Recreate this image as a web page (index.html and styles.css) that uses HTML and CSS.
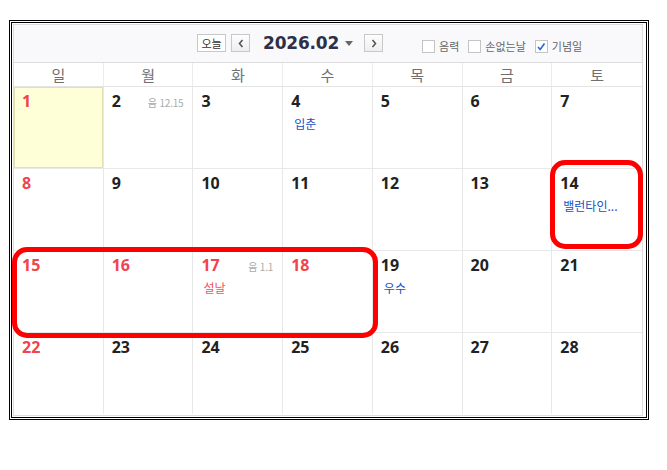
FILE: index.html
```html
<!DOCTYPE html>
<html lang="ko">
<head>
<meta charset="utf-8">
<link rel="stylesheet" href="styles.css">
</head>
<body>
<div class="frame">
  <div class="cal">
    <div class="head">
      <div class="nav">
        <button class="btn today">오늘</button>
        <button class="btn arrow"><svg width="6" height="9" viewBox="0 0 6 9"><path d="M4.5 1 L1.5 4.5 L4.5 8" fill="none" stroke="#555" stroke-width="1.6"/></svg></button>
        <span class="title">2026.02</span>
        <svg class="caret" width="8" height="5" viewBox="0 0 8 5"><path d="M0 0 H8 L4 5 Z" fill="#666"/></svg>
        <button class="btn arrow next"><svg width="6" height="9" viewBox="0 0 6 9"><path d="M1.5 1 L4.5 4.5 L1.5 8" fill="none" stroke="#555" stroke-width="1.6"/></svg></button>
      </div>
      <div class="opts">
        <label class="opt"><span class="box"></span>음력</label>
        <label class="opt"><span class="box"></span>손없는날</label>
        <label class="opt"><span class="box"><svg width="10" height="10" viewBox="0 0 10 10"><path d="M2 5 L4.2 7.5 L8.5 1.5" fill="none" stroke="#2a6ad0" stroke-width="1.7"/></svg></span>기념일</label>
      </div>
    </div>
    <div class="week-head">
      <div>일</div><div>월</div><div>화</div><div>수</div><div>목</div><div>금</div><div>토</div>
    </div>
    <div class="grid">
      <div class="cell is-today"><div class="top"><span class="num red">1</span></div></div>
      <div class="cell"><div class="top"><span class="num">2</span><span class="lunar">음 12.15</span></div></div>
      <div class="cell"><div class="top"><span class="num">3</span></div></div>
      <div class="cell"><div class="top"><span class="num">4</span></div><div class="ev blue">입춘</div></div>
      <div class="cell"><div class="top"><span class="num">5</span></div></div>
      <div class="cell"><div class="top"><span class="num">6</span></div></div>
      <div class="cell last"><div class="top"><span class="num">7</span></div></div>

      <div class="cell"><div class="top"><span class="num red">8</span></div></div>
      <div class="cell"><div class="top"><span class="num">9</span></div></div>
      <div class="cell"><div class="top"><span class="num">10</span></div></div>
      <div class="cell"><div class="top"><span class="num">11</span></div></div>
      <div class="cell"><div class="top"><span class="num">12</span></div></div>
      <div class="cell"><div class="top"><span class="num">13</span></div></div>
      <div class="cell last"><div class="top"><span class="num">14</span></div><div class="ev blue">밸런타인...</div></div>

      <div class="cell"><div class="top"><span class="num red">15</span></div></div>
      <div class="cell"><div class="top"><span class="num red">16</span></div></div>
      <div class="cell"><div class="top"><span class="num red">17</span><span class="lunar">음 1.1</span></div><div class="ev redev">설날</div></div>
      <div class="cell"><div class="top"><span class="num red">18</span></div></div>
      <div class="cell"><div class="top"><span class="num">19</span></div><div class="ev blue">우수</div></div>
      <div class="cell"><div class="top"><span class="num">20</span></div></div>
      <div class="cell last"><div class="top"><span class="num">21</span></div></div>

      <div class="cell bottom"><div class="top"><span class="num red">22</span></div></div>
      <div class="cell bottom"><div class="top"><span class="num">23</span></div></div>
      <div class="cell bottom"><div class="top"><span class="num">24</span></div></div>
      <div class="cell bottom"><div class="top"><span class="num">25</span></div></div>
      <div class="cell bottom"><div class="top"><span class="num">26</span></div></div>
      <div class="cell bottom"><div class="top"><span class="num">27</span></div></div>
      <div class="cell bottom last"><div class="top"><span class="num">28</span></div></div>
    </div>
  </div>
  <div class="mark mark-a"></div>
  <div class="mark mark-b"></div>
</div>
</body>
</html>
```
FILE: styles.css
```css
* { box-sizing: border-box; }
body {
  margin: 0;
  background: #fff;
  font-family: "Noto Sans", "Noto Sans CJK KR", sans-serif;
}
.frame {
  position: relative;
  margin: 20px 0 0 9px;
  width: 640px;
  height: 400px;
  border: 3px double #000;
  padding: 1px 3px 1px 1px;
}
.cal {
  width: 630px;
  border: 1px solid #dcdcdc;
  background: #fff;
}
.head {
  height: 38px;
  background: #f9f9fb;
  border-bottom: 1px solid #dcdcdc;
  display: flex;
  align-items: flex-start;
  padding-left: 183px;
}
.nav {
  display: flex;
  align-items: center;
  margin-top: 9px;
  height: 18px;
}
.btn {
  height: 18px;
  margin: 0;
  padding: 0;
  border: 1px solid #c8c8c8;
  background: #fff;
  font-family: "Noto Sans CJK KR", sans-serif;
  font-size: 11px;
  color: #333;
  display: flex;
  align-items: center;
  justify-content: center;
  line-height: 1;
}
.today { width: 29px; }
.arrow {
  width: 19px;
  margin-left: 5px;
  background: linear-gradient(#fdfdfd, #eeeeee);
}
.title {
  margin-left: 13px;
  font-family: "DejaVu Sans", sans-serif;
  font-weight: bold;
  font-size: 17px;
  color: #2d3048;
  letter-spacing: -0.2px;
  line-height: 18px;
}
.caret { margin-left: 6px; }
.next { margin-left: 11px; }
.opts {
  display: flex;
  align-items: center;
  margin-top: 15px;
  margin-left: 39px;
  gap: 9px;
}
.opt {
  display: flex;
  align-items: center;
  font-family: "Noto Sans CJK KR", sans-serif;
  font-size: 11px;
  color: #666;
  line-height: 13px;
}
.box {
  width: 13px;
  height: 13px;
  border: 1px solid #c4c4c4;
  background: #fff;
  margin-right: 4px;
  display: flex;
  align-items: center;
  justify-content: center;
}
.week-head {
  display: grid;
  grid-template-columns: repeat(7, 1fr);
  height: 24px;
  border-bottom: 1px solid #e4e4e4;
}
.week-head div {
  border-right: 1px solid #ececec;
  text-align: center;
  font-family: "Noto Sans CJK KR", sans-serif;
  font-size: 15px;
  line-height: 23px;
  color: #707070;
}
.week-head div:last-child { border-right: 0; }
.grid {
  display: grid;
  grid-template-columns: repeat(7, 1fr);
  grid-auto-rows: 82px;
}
.cell {
  border-right: 1px solid #e8e8e8;
  border-bottom: 1px solid #e8e8e8;
  padding: 4px 8px 0 8px;
}
.cell.last { border-right: 0; }
.cell.bottom { border-bottom: 0; height: 81px; }
.is-today {
  background: #ffffd7;
  box-shadow: inset 0 0 0 1px #e2dfb2;
}
.top {
  display: flex;
  justify-content: space-between;
  align-items: baseline;
  height: 21px;
}
.num {
  font-weight: bold;
  font-size: 16px;
  color: #222;
  line-height: 21px;
}
.num.red { color: #f2434e; }
.lunar {
  font-family: "Noto Sans CJK KR", sans-serif;
  font-size: 10px;
  color: #aaa;
  margin-right: 1px;
  letter-spacing: -0.2px;
}
.ev {
  margin-top: 4px;
  padding-left: 3px;
  font-family: "Noto Sans CJK KR", sans-serif;
  font-size: 12px;
  line-height: 16px;
  white-space: nowrap;
}
.blue { color: #2050c0; }
.redev { color: #f2525a; padding-left: 2px; }
.mark {
  position: absolute;
  border: 5px solid #ff0000;
  border-radius: 15px;
}
.mark-a {
  left: 538px;
  top: 137px;
  width: 93px;
  height: 89px;
}
.mark-b {
  left: 0px;
  top: 224px;
  width: 366px;
  height: 91px;
}
```
